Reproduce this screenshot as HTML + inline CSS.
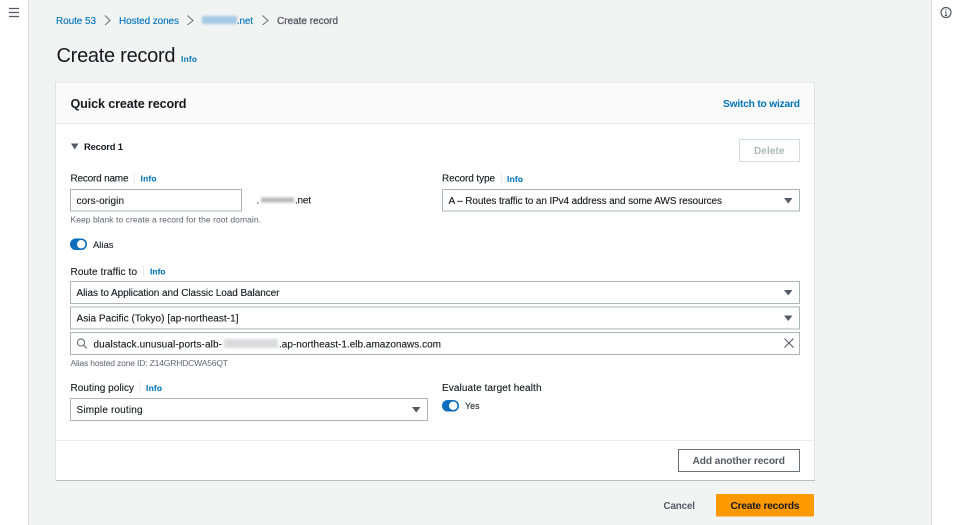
<!DOCTYPE html>
<html lang="en">
<head>
<meta charset="utf-8">
<title>Create record</title>
<style>
html,body{margin:0;padding:0;width:960px;height:525px;overflow:hidden;background:#f2f3f3}
svg{display:block;position:absolute;left:0;top:0;filter:blur(.3px)}
text{font-family:"Liberation Sans",sans-serif;font-size:10px;fill:#16191f;stroke:#16191f;stroke-width:.12}
.l{fill:#0073bb;stroke:#0073bb}
.i{fill:#0073bb;stroke:#0073bb;font-weight:bold;font-size:8.300px}
.b{font-weight:bold;stroke-width:0}
.h{fill:#687078;stroke:#687078;font-size:8.500px;stroke-width:.05}
.g{fill:#545b64;stroke:#545b64}
.f{fill:#fff;stroke:#aab7b8;stroke-width:1}
.sep{stroke:#eaeded;stroke-width:1}
.ch{fill:none;stroke:#687078;stroke-width:1}
.ar{fill:#545b64}
</style>
</head>
<body>
<svg width="960" height="525" viewBox="0 0 960 525" xmlns="http://www.w3.org/2000/svg">
<defs>
<filter id="bl" x="-20%" y="-60%" width="140%" height="220%"><feGaussianBlur stdDeviation="1.2"/></filter>
</defs>
<rect x="0" y="0" width="960" height="525" fill="#f2f3f3"/>
<rect x="0" y="0" width="28" height="525" fill="#fff"/>
<rect x="28" y="0" width="1" height="525" fill="#d5dbdb"/>
<rect x="932" y="0" width="28" height="525" fill="#fff"/>
<rect x="931" y="0" width="1" height="525" fill="#d5dbdb"/>

<path d="M9 8.500H19M9 12.500H19M9 16.500H19" stroke="#545b64" stroke-width="1.200" fill="none"/>
<circle cx="946" cy="12.500" r="5" fill="none" stroke="#545b64" stroke-width="1.200"/>
<path d="M946 12V15.500M944.800 15.500H947.200M945 12H946" stroke="#545b64" stroke-width="1" fill="none"/>
<rect x="945.400" y="9.400" width="1.200" height="1.200" fill="#545b64"/>

<text class="l" x="56" y="24" textLength="40" lengthAdjust="spacing">Route 53</text>
<path class="ch" d="M105 15.500L110 20.500L105 25"/>
<text class="l" x="119" y="24" textLength="60" lengthAdjust="spacing">Hosted zones</text>
<path class="ch" d="M187.500 15.500L193 20.500L187.500 25"/>
<rect x="202" y="16" width="35" height="8" fill="#a5c9e4" filter="url(#bl)"/>
<text class="l" x="237" y="24" textLength="16" lengthAdjust="spacing">.net</text>
<path class="ch" d="M262.500 15.500L268 20.500L262.500 25"/>
<text class="g" x="277" y="24" textLength="61" lengthAdjust="spacing" style="stroke-width:.3">Create record</text>

<text x="56.500" y="62" textLength="119" lengthAdjust="spacing" style="font-size:20px;stroke-width:0">Create record</text>
<text class="i" x="181" y="62" textLength="16" lengthAdjust="spacing" style="stroke-width:0">Info</text>

<rect x="56" y="82" width="758" height="398" fill="#fff"/>
<rect x="56" y="82" width="758" height="41" fill="#fafafa"/>
<path d="M56 82H814" stroke="#e4e7e7" stroke-width="1"/>
<path d="M55.500 82V480M814.500 82V480" stroke="#dfe3e3" stroke-width="1"/>
<path d="M56 480.500H815" stroke="#b6c0c0" stroke-width="1"/>
<path d="M56 123.500H814" stroke="#eaeded" stroke-width="1"/>
<path d="M56 440.500H814" stroke="#eaeded" stroke-width="1"/>

<text class="b" x="70.500" y="108" textLength="116" lengthAdjust="spacing" style="font-size:12.600px">Quick create record</text>
<text class="l b" x="723" y="107" textLength="77" lengthAdjust="spacing" style="font-size:10.200px">Switch to wizard</text>

<path class="ar" d="M71 143.500H78.500L74.750 149.500Z"/>
<text class="b" x="84" y="150" textLength="39" lengthAdjust="spacing" style="font-size:9.400px">Record 1</text>

<rect x="739.500" y="139.500" width="60" height="22" fill="#fff" stroke="#d5dbdb"/>
<text class="b" x="754" y="154" textLength="30.500" lengthAdjust="spacing" style="fill:#aab7b8;font-size:10px">Delete</text>

<text x="70.500" y="181.500" textLength="58" lengthAdjust="spacing">Record name</text>
<path class="sep" d="M134.500 173V184"/>
<text class="i" x="140.500" y="181.500" textLength="16" lengthAdjust="spacing">Info</text>
<rect class="f" x="70.500" y="189.500" width="171" height="21.500"/>
<text x="76.500" y="204" textLength="47.500" lengthAdjust="spacing">cors-origin</text>
<text x="256.500" y="203.500" textLength="3" lengthAdjust="spacing">.</text>
<rect x="261" y="197.500" width="33" height="5" fill="#b5b8bb" filter="url(#bl)"/>
<text x="295" y="203.500" textLength="16" lengthAdjust="spacing">.net</text>
<text class="h" x="70.500" y="222.500" textLength="190.500" lengthAdjust="spacing">Keep blank to create a record for the root domain.</text>

<rect x="70" y="238.500" width="17" height="11.500" rx="5.750" fill="#0a6ebd"/>
<circle cx="81.200" cy="244.250" r="4.200" fill="#fff"/>
<text x="93" y="248" textLength="20.500" lengthAdjust="spacing" style="fill:#232a31;font-size:9.500px">Alias</text>

<text x="70.500" y="275" textLength="66.500" lengthAdjust="spacing">Route traffic to</text>
<path class="sep" d="M143.500 265.500V276.500"/>
<text class="i" x="150" y="274.500" textLength="15.500" lengthAdjust="spacing">Info</text>
<rect class="f" x="70.500" y="281.500" width="729" height="22"/>
<text x="76.500" y="296" textLength="203" lengthAdjust="spacing">Alias to Application and Classic Load Balancer</text>
<path class="ar" d="M784 290H792.500L788.250 295.500Z"/>
<rect class="f" x="70.500" y="307" width="729" height="22"/>
<text x="76.500" y="321.500" textLength="162" lengthAdjust="spacing">Asia Pacific (Tokyo) [ap-northeast-1]</text>
<path class="ar" d="M784 315.500H792.500L788.250 321Z"/>
<rect class="f" x="70.500" y="332.500" width="729" height="22"/>
<circle cx="81" cy="342.500" r="3.600" fill="none" stroke="#687078" stroke-width="1.100"/>
<path d="M83.700 345.200L86.800 348.500" stroke="#687078" stroke-width="1.200"/>
<text x="93.500" y="347.500" textLength="128.500" lengthAdjust="spacing">dualstack.unusual-ports-alb-</text>
<rect x="224" y="339" width="54" height="9" fill="#d9dbdd" filter="url(#bl)"/>
<text x="279" y="347.500" textLength="162" lengthAdjust="spacing">.ap-northeast-1.elb.amazonaws.com</text>
<path d="M784.500 338.500L793.500 347.500M793.500 338.500L784.500 347.500" stroke="#545b64" stroke-width="1.100"/>
<text class="h" x="70.500" y="366" textLength="157.500" lengthAdjust="spacing">Alias hosted zone ID: Z14GRHDCWA56QT</text>

<text x="70.500" y="391" textLength="63.500" lengthAdjust="spacing">Routing policy</text>
<path class="sep" d="M140 382V393"/>
<text class="i" x="146" y="391" textLength="16" lengthAdjust="spacing">Info</text>
<rect class="f" x="70.500" y="398.500" width="357" height="22"/>
<text x="76.500" y="413" textLength="66" lengthAdjust="spacing">Simple routing</text>
<path class="ar" d="M412 407H420.500L416.250 412.500Z"/>

<text x="442" y="391" textLength="99.500" lengthAdjust="spacing">Evaluate target health</text>
<rect x="442" y="400" width="17" height="11.500" rx="5.750" fill="#0a6ebd"/>
<circle cx="453.200" cy="405.750" r="4.200" fill="#fff"/>
<text x="465" y="409" textLength="14.500" lengthAdjust="spacing" style="fill:#232a31;font-size:8.800px">Yes</text>

<text x="442" y="181.500" textLength="53" lengthAdjust="spacing">Record type</text>
<path class="sep" d="M501.500 173V184"/>
<text class="i" x="507" y="182" textLength="16" lengthAdjust="spacing">Info</text>
<rect class="f" x="442.500" y="189.500" width="357" height="21.500"/>
<text x="448.500" y="204" textLength="273.500" lengthAdjust="spacing">A – Routes traffic to an IPv4 address and some AWS resources</text>
<path class="ar" d="M784 198H792.500L788.250 203.500Z"/>

<rect x="678.500" y="449.500" width="121" height="22" fill="#fff" stroke="#687078"/>
<text class="g b" x="692.500" y="464" textLength="92.500" lengthAdjust="spacing" style="font-size:10.200px">Add another record</text>

<text class="g b" x="663.500" y="509" textLength="31.500" lengthAdjust="spacing" style="font-size:9.800px">Cancel</text>
<rect x="716" y="494" width="98" height="22.500" rx="1" fill="#f90"/>
<text class="b" x="730.500" y="509" textLength="69" lengthAdjust="spacing" style="font-size:10.200px">Create records</text>
</svg>
</body>
</html>
